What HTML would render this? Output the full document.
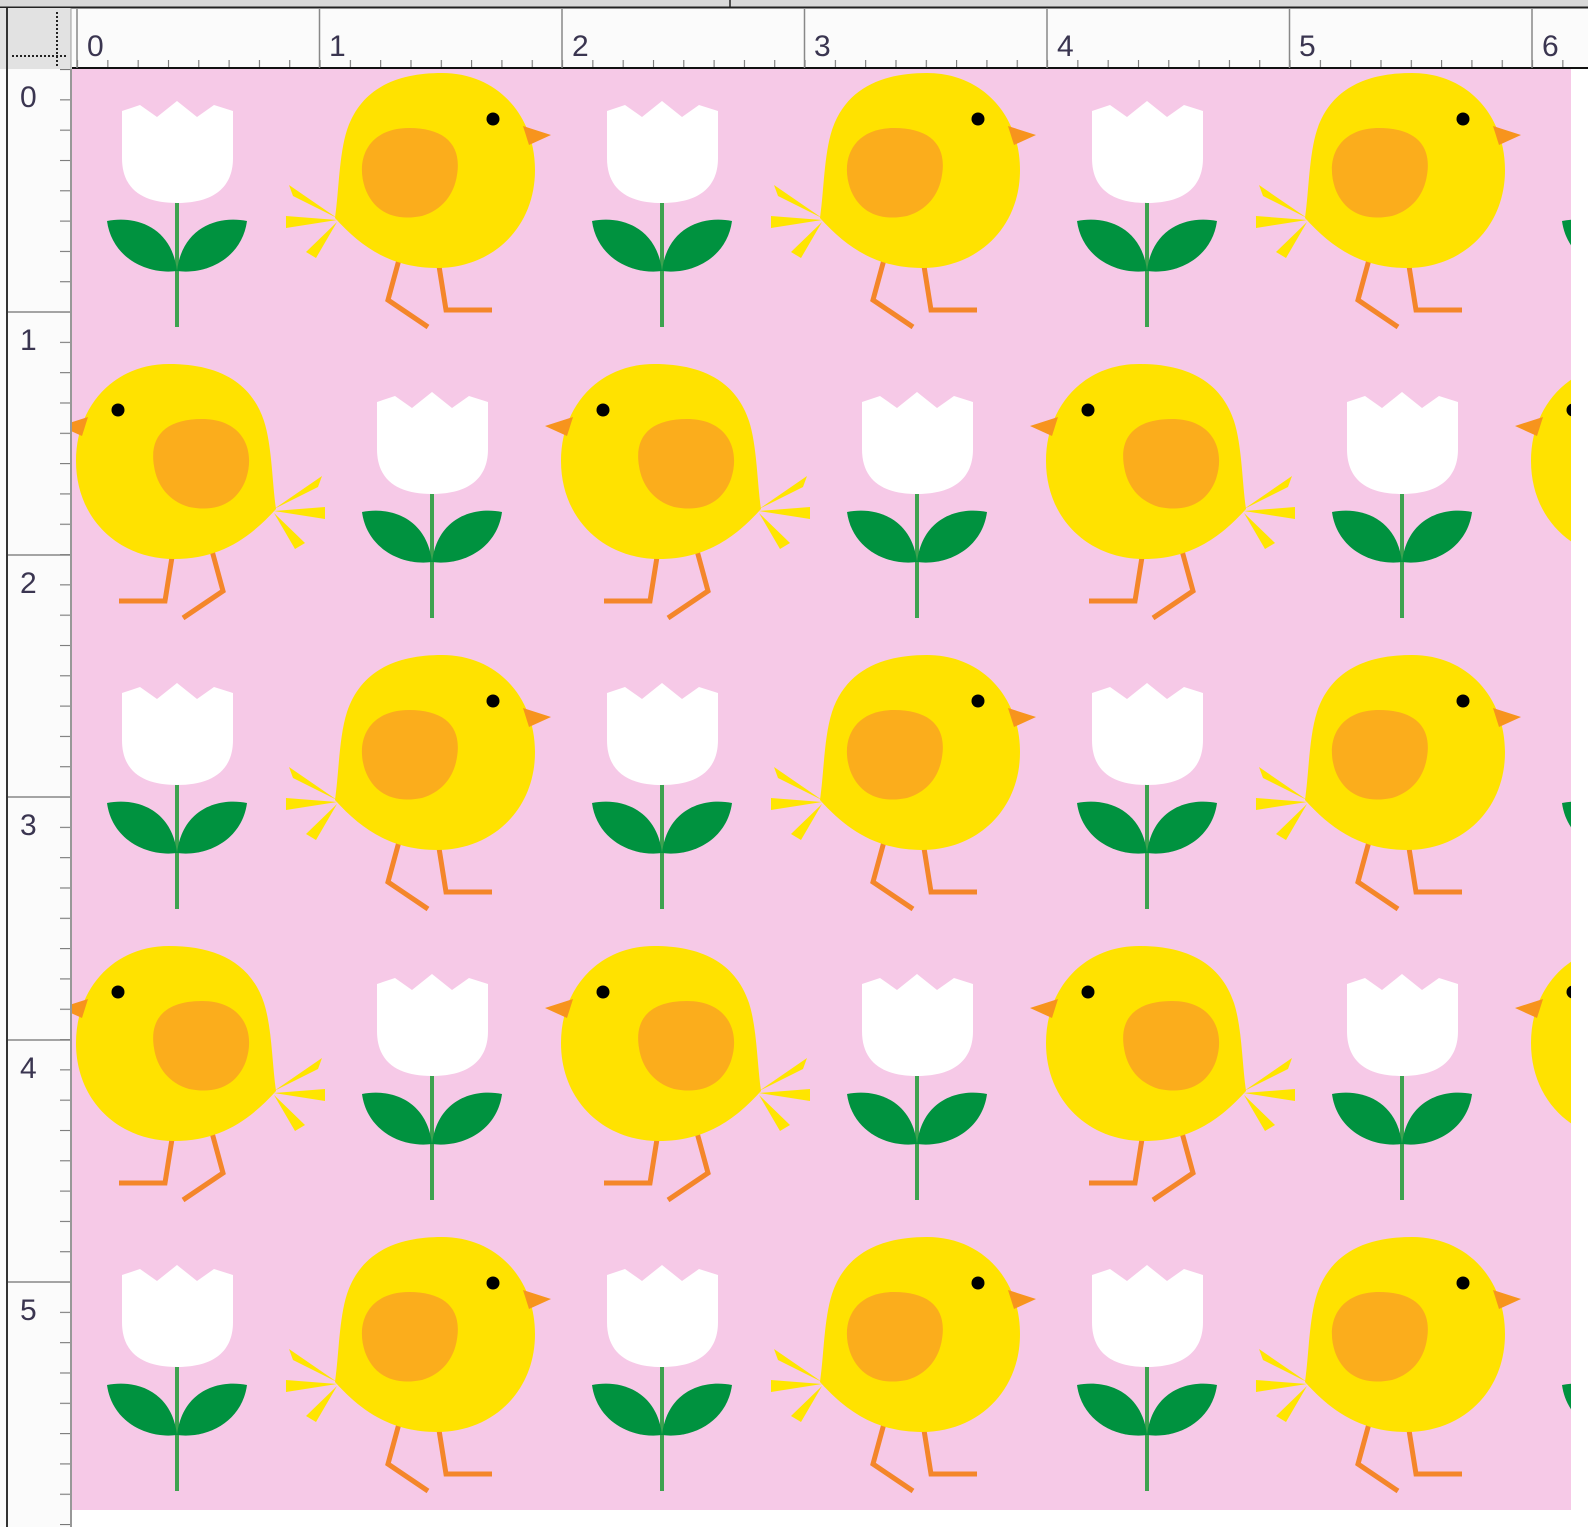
<!DOCTYPE html>
<html><head><meta charset="utf-8"><style>
html,body{margin:0;padding:0;background:#fff;}
svg{display:block;}
</style></head><body>
<svg width="1588" height="1527" viewBox="0 0 1588 1527" xmlns="http://www.w3.org/2000/svg">
<defs>
  <pattern id="tickH" patternUnits="userSpaceOnUse" x="77" y="0" width="30.3125" height="80">
    <line x1="0.5" y1="60" x2="0.5" y2="68" stroke="#777" stroke-width="1.2"/>
  </pattern>
  <pattern id="tickV" patternUnits="userSpaceOnUse" x="0" y="69" width="80" height="30.3125">
    <line x1="60" y1="0.5" x2="70" y2="0.5" stroke="#777" stroke-width="1.2"/>
  </pattern>
  <g id="chick">
    <g fill="#ffe500">
      <path d="M-100,48 L-148,15 L-144,26 Z"/>
      <path d="M-100,50 L-151,46 L-151,58 Z"/>
      <path d="M-100,52 L-131,82 L-121,88 Z"/>
    </g>
    <path d="M-37,86 L-49,130 L-9,157 M2,96 L9,140 L55,140" stroke="#f4862a" stroke-width="5" fill="none" stroke-linejoin="miter"/>
    <path d="M-102,48 C-98,20 -98,-15 -90,-40 C-76,-82 -40,-97 5,-97 C60,-97 98,-55 98,0 C98,58 55,98 0,98 C-45,98 -75,78 -102,48 Z" fill="#ffe200"/>
    <path d="M-72,18 C-82,-12 -68,-42 -28,-42 C8,-42 25,-25 20,5 C17,25 5,40 -15,46 C-45,52 -64,40 -72,18 Z" fill="#fbad1c"/>
    <circle cx="56" cy="-51" r="6.5" fill="#000"/>
    <path d="M86,-44 L114,-35 L92,-25 Z" fill="#f7941d"/>
  </g>
  <g id="tulip">
    <line x1="0" y1="95" x2="0" y2="224" stroke="#3da250" stroke-width="4"/>
    <path d="M0,168 C-30,172 -65,155 -70,118 C-40,112 -5,125 0,168 Z" fill="#00923f"/>
    <path d="M0,168 C30,172 65,155 70,118 C40,112 5,125 0,168 Z" fill="#00923f"/>
    <path d="M-55,8 L-37,2 L-20,14 L0,-2 L20,14 L37,2 L56,8 L56,55 C56,88 32,100 0,100 C-32,100 -55,88 -55,55 Z" fill="#fff"/>
  </g>
  <clipPath id="clip"><rect x="72" y="69" width="1499" height="1441"/></clipPath>
</defs>

<rect x="0" y="0" width="1588" height="7" fill="#d9d9d9"/>
<line x1="0" y1="7.5" x2="1588" y2="7.5" stroke="#222" stroke-width="2"/>
<line x1="730" y1="0" x2="730" y2="7" stroke="#222" stroke-width="1.5"/>
<rect x="0" y="8" width="71" height="61" fill="#e2e2e2"/>
<line x1="57" y1="12" x2="57" y2="68" stroke="#222" stroke-width="2" stroke-dasharray="2,2"/>
<line x1="12" y1="56" x2="68" y2="56" stroke="#222" stroke-width="2" stroke-dasharray="2,2"/>
<rect x="72" y="9" width="1516" height="59" fill="#fbfbfb"/>
<rect x="72" y="9" width="1516" height="59" fill="url(#tickH)"/>
<line x1="72" y1="68" x2="1588" y2="68" stroke="#111" stroke-width="2"/>
<rect x="0" y="69" width="71" height="1458" fill="#fbfbfb"/>
<line x1="7" y1="8" x2="7" y2="1527" stroke="#333" stroke-width="2"/>
<rect x="8" y="69" width="62" height="1458" fill="url(#tickV)"/>
<line x1="71" y1="69" x2="71" y2="1527" stroke="#777" stroke-width="1.5"/>
<line x1="71" y1="8" x2="71" y2="69" stroke="#999" stroke-width="1"/>

<g stroke="#888" stroke-width="1.5">
  <line x1="77" y1="9" x2="77" y2="68"/><line x1="319.5" y1="9" x2="319.5" y2="68"/><line x1="562" y1="9" x2="562" y2="68"/><line x1="804.5" y1="9" x2="804.5" y2="68"/><line x1="1047" y1="9" x2="1047" y2="68"/><line x1="1289.5" y1="9" x2="1289.5" y2="68"/><line x1="1532" y1="9" x2="1532" y2="68"/>
  <line x1="8" y1="312" x2="70" y2="312"/><line x1="8" y1="555" x2="70" y2="555"/><line x1="8" y1="797" x2="70" y2="797"/><line x1="8" y1="1040" x2="70" y2="1040"/><line x1="8" y1="1282" x2="70" y2="1282"/>
</g>
<g font-family="Liberation Sans, sans-serif" font-size="30" fill="#3a3550">
  <text x="87" y="56">0</text><text x="329" y="56">1</text><text x="572" y="56">2</text><text x="814" y="56">3</text><text x="1057" y="56">4</text><text x="1299" y="56">5</text><text x="1542" y="56">6</text>
  <text x="20" y="107">0</text><text x="20" y="350">1</text><text x="20" y="593">2</text><text x="20" y="835">3</text><text x="20" y="1078">4</text><text x="20" y="1320">5</text>
</g>

<rect x="72" y="69" width="1499" height="1441" fill="#f6c9e7"/>
<g clip-path="url(#clip)">
  <g>
    <use href="#tulip" x="177" y="103"/><use href="#tulip" x="662" y="103"/><use href="#tulip" x="1147" y="103"/><use href="#tulip" x="1632" y="103"/>
    <use href="#chick" x="437" y="170"/><use href="#chick" x="922" y="170"/><use href="#chick" x="1407" y="170"/>
  </g>
  <g transform="translate(0,582)">
    <use href="#tulip" x="177" y="103"/><use href="#tulip" x="662" y="103"/><use href="#tulip" x="1147" y="103"/><use href="#tulip" x="1632" y="103"/>
    <use href="#chick" x="437" y="170"/><use href="#chick" x="922" y="170"/><use href="#chick" x="1407" y="170"/>
  </g>
  <g transform="translate(0,1164)">
    <use href="#tulip" x="177" y="103"/><use href="#tulip" x="662" y="103"/><use href="#tulip" x="1147" y="103"/><use href="#tulip" x="1632" y="103"/>
    <use href="#chick" x="437" y="170"/><use href="#chick" x="922" y="170"/><use href="#chick" x="1407" y="170"/>
  </g>
  <g transform="translate(0,291)">
    <use href="#tulip" x="432" y="103"/><use href="#tulip" x="917" y="103"/><use href="#tulip" x="1402" y="103"/>
    <g transform="translate(174,170) scale(-1,1)"><use href="#chick"/></g>
    <g transform="translate(659,170) scale(-1,1)"><use href="#chick"/></g>
    <g transform="translate(1144,170) scale(-1,1)"><use href="#chick"/></g>
    <g transform="translate(1629,170) scale(-1,1)"><use href="#chick"/></g>
  </g>
  <g transform="translate(0,873)">
    <use href="#tulip" x="432" y="103"/><use href="#tulip" x="917" y="103"/><use href="#tulip" x="1402" y="103"/>
    <g transform="translate(174,170) scale(-1,1)"><use href="#chick"/></g>
    <g transform="translate(659,170) scale(-1,1)"><use href="#chick"/></g>
    <g transform="translate(1144,170) scale(-1,1)"><use href="#chick"/></g>
    <g transform="translate(1629,170) scale(-1,1)"><use href="#chick"/></g>
  </g>
</g>
</svg>
</body></html>
